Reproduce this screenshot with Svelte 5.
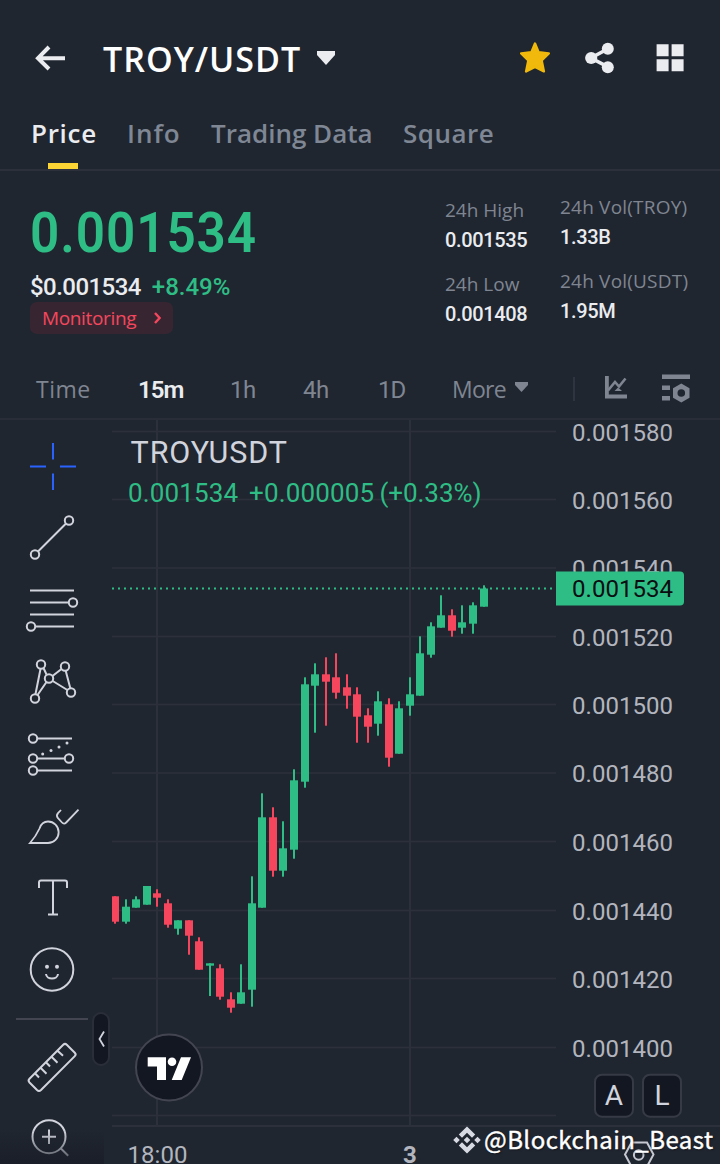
<script>
  const tabs = [
    { label: 'Price', cls: 'price' },
    { label: 'Info', cls: 'info' },
    { label: 'Trading Data', cls: 'data' },
    { label: 'Square', cls: 'square' }
  ];

  const stats = [
    [
      { label: '24h High', value: '0.001535' },
      { label: '24h Low', value: '0.001408' }
    ],
    [
      { label: '24h Vol(TROY)', value: '1.33B' },
      { label: '24h Vol(USDT)', value: '1.95M' }
    ]
  ];

  const gridRows = [431.5, 499.5, 568, 636.5, 704.5, 773, 841.5, 910.5, 978.5, 1047.5, 1115.5];
  const prices = ['0.001580', '0.001560', '0.001540', '0.001520', '0.001500', '0.001480', '0.001460', '0.001440', '0.001420', '0.001400'];

  // [left, body top, body bottom, wick top, wick bottom, rising]
  const candles = [
    [111, 896.3, 921.7, 896.3, 923.7, 0],
    [122, 906.7, 921.7, 899.3, 923.7, 1],
    [132, 899.3, 907.7, 896.3, 907.7, 1],
    [143, 886, 904.7, 886, 904.7, 1],
    [153, 893.3, 897.7, 889.3, 906.7, 0],
    [164, 903.3, 924.7, 899.3, 927.7, 0],
    [174, 920.3, 928.7, 920.3, 934.7, 1],
    [185, 920.3, 935.7, 920.3, 954.7, 0],
    [195, 941.3, 969.7, 937.3, 969.7, 0],
    [206, 963.3, 965.7, 963.3, 996, 1],
    [216, 968.3, 996.7, 964.3, 999.7, 0],
    [227, 999.3, 1007.7, 992.3, 1012.7, 0],
    [237, 992.3, 1003.7, 964.3, 1003.7, 1],
    [248, 903.3, 989.7, 876.3, 1006.7, 1],
    [258, 817.3, 907.7, 793.3, 907.7, 1],
    [269, 817.3, 870.7, 807.3, 876.7, 0],
    [279, 848.3, 870.7, 821.3, 876.7, 1],
    [290, 780.3, 849.7, 769.3, 858.7, 1],
    [301, 684.3, 781.7, 677.3, 787.7, 1],
    [311, 674.3, 685.7, 663.3, 732.7, 1],
    [322, 674.3, 681.7, 657.3, 725.7, 0],
    [332, 677.3, 692.7, 653.3, 698.7, 0],
    [343, 687.3, 695.7, 674.3, 708.7, 0],
    [353, 694.3, 716.7, 687.3, 742.7, 0],
    [364, 715.3, 726.7, 708.3, 742.7, 0],
    [374, 701.3, 723.7, 691.3, 735.7, 1],
    [385, 704.3, 757.7, 698.3, 766.7, 0],
    [395, 708.3, 753.7, 701.3, 753.7, 1],
    [406, 694.3, 705.7, 677.3, 715.7, 1],
    [416, 653.3, 695.7, 636.3, 695.7, 1],
    [427, 626.3, 654.7, 622.3, 657.7, 1],
    [437, 615.3, 627.7, 595.3, 627.7, 1],
    [448, 615.3, 630.7, 609.3, 636.7, 0],
    [458, 622.3, 627.7, 605.3, 633.7, 1],
    [469, 605.3, 623.7, 602.3, 633.7, 1],
    [480, 588.5, 606.7, 585.3, 606.7, 1]
  ];
</script>

<div class="app">
  <header>
    <svg class="back" width="30" height="26" viewBox="0 0 30 26" fill="none" stroke="#eaecef" stroke-width="4">
      <path d="M30 13.2H3M14 2 3 13.2l11 10.8" />
    </svg>
    <h1>TROY/USDT</h1>
    <svg class="caret" width="18" height="14" viewBox="0 0 18 14" fill="#eaecef"><path d="M0 0h18v4l-9 10L0 4z" /></svg>
    <svg class="star" width="30" height="31" viewBox="0 0 30 31" fill="#f0b90b" stroke="#f0b90b" stroke-width="2.4" stroke-linejoin="round">
      <path d="M15 1.5l3.6 8.6 10.2 1.3-7.1 7 2.2 11L15 25l-8.9 4.4 2.2-11-7.1-7 10.2-1.3z" />
    </svg>
    <svg class="share" width="30" height="32" viewBox="0 0 30 32" fill="#eaecef" stroke="#eaecef" stroke-width="3.6">
      <path d="M23.4 6.5 6 16l17.4 9.2" fill="none" />
      <g stroke="none"><circle cx="6.2" cy="16" r="6.1" /><circle cx="22.8" cy="6.7" r="6" /><circle cx="22.8" cy="25.2" r="6" /></g>
    </svg>
    <svg class="grid" width="28" height="28" viewBox="0 0 28 28" fill="#eaecef">
      <path d="M.6.3h12v12H.6zM15.6.3h12v12h-12zM.6 15.3h12v12H.6zM15.6 15.3h12v12h-12z" />
    </svg>
  </header>

  <nav class="tabs">
    {#each tabs as tab, i}
      <span class="tab {tab.cls}" class:active={i === 0}>{tab.label}</span>
    {/each}
  </nav>

  <section class="summary">
    <div class="quote">
      <div class="last">0.001534</div>
      <div class="fiat"><span class="usd">$0.001534</span><span class="up">+8.49%</span></div>
      <div class="badge">
        <span>Monitoring</span>
        <svg width="7" height="12" viewBox="0 0 7 12" fill="none" stroke="#f6465d" stroke-width="2.4"><path d="M1 1l4.6 5L1 11" /></svg>
      </div>
    </div>
    {#each stats as column, c}
      <div class="stats c{c}">
        {#each column as item}
          <div class="stat"><div class="name">{item.label}</div><div class="val">{item.value}</div></div>
        {/each}
      </div>
    {/each}
  </section>

  <nav class="frames">
    <span class="time">Time</span>
    <span class="m15">15m</span>
    <span class="h1">1h</span>
    <span class="h4">4h</span>
    <span class="d1">1D</span>
    <span class="more">More</span>
    <svg class="dd" width="13" height="10" viewBox="0 0 13 10" fill="#7f8591"><path d="M0 0h13v3l-6.5 7L0 3z" /></svg>
    <i></i>
    <svg class="ind" width="22" height="23" viewBox="0 0 22 23" fill="none" stroke="#7f8591">
      <path d="M1.8 0v20.500H22" stroke-width="4" /><path d="M3 14.500l7-8.500 4 4.500 6.500-8" stroke-width="2.6" />
      <path d="M9.500 15l3.500-3.500 4 3.500z" fill="#7f8591" stroke="none" />
    </svg>
    <svg class="set" width="28" height="29" viewBox="0 0 28 29" fill="#7f8591">
      <path d="M0 .5h28V5H0zM0 11.500h8V16H0zM0 22h8v4.500H0z" />
      <path fill-rule="evenodd" d="M19.300 9.500l8.200 4.700v9.600l-8.200 4.700-8.300-4.700v-9.600zM19.300 15.200a3.800 3.800 0 1 0 0 7.600 3.800 3.800 0 0 0 0-7.600z" />
    </svg>
  </nav>

  <main>
    <aside>
      <svg class="tool" viewBox="0 0 104 72"><path stroke="#2962ff" d="M53 13v16.500M53 43.500V60M30 36.500h16M60 36.500h16" /></svg>
      <svg class="tool" viewBox="0 0 104 72"><circle cx="69" cy="18.500" r="4.200" /><circle cx="35" cy="52.500" r="4.200" /><path d="M66 21.500l-28 28" /></svg>
      <svg class="tool" viewBox="0 0 104 72"><path d="M30 16.500h44M30 28.500h39M30 40.500h44M35 52.500h39" /><circle cx="73" cy="28.500" r="4.200" /><circle cx="31" cy="52.500" r="4.200" /></svg>
      <svg class="tool" viewBox="0 0 104 72">
        <circle cx="41" cy="18.500" r="4.200" /><circle cx="65" cy="20.500" r="4.200" /><circle cx="49" cy="32.500" r="4.200" /><circle cx="71" cy="46.500" r="4.200" /><circle cx="35" cy="52.500" r="4.200" />
        <path d="M40.500 23L35.500 48M43.500 22l3 6.500M61.500 23l-9 7M65.700 24.700l4.600 17.600M52.700 35l14.700 9M46.500 36L37.500 49" />
      </svg>
      <svg class="tool" viewBox="0 0 104 72">
        <path d="M37 20.500h35M37 40.500h28M37 52.500h35" /><circle cx="33" cy="20.500" r="4.200" /><circle cx="33" cy="40.500" r="4.200" /><circle cx="69" cy="40.500" r="4.200" /><circle cx="33" cy="52.500" r="4.200" />
        <g fill="#d1d4dc" stroke="none"><circle cx="42.700" cy="36" r="1.500" /><circle cx="51" cy="32.500" r="1.500" /><circle cx="59" cy="29" r="1.500" /><circle cx="67" cy="25" r="1.500" /></g>
      </svg>
      <svg class="tool thin" viewBox="0 0 104 72">
        <path d="M30 53C33.500 49 37 44 39.500 38.500c1.500-4.500 4.500-7 8.500-7a10.600 10.700 0 0 1 0 21.500z" />
        <path d="M61 20l-3 3.200q-2.200 2.500 0 5l4 4.300q2 2.200 4.200 0L78.500 19.700" />
      </svg>
      <svg class="tool" viewBox="0 0 104 72"><path d="M39 26v-5.500q0-2 2-2h24q2 0 2 2V26M53 18.500v34M48 52.500h10" /></svg>
      <svg class="tool" viewBox="0 0 104 72"><circle cx="52" cy="35.500" r="21.300" /><path d="M46 40c.5 6 11.500 6 12 0" /><g fill="#d1d4dc" stroke="none"><circle cx="47" cy="32.700" r="2" /><circle cx="57" cy="32.700" r="2" /></g></svg>
      <hr />
      <svg class="tool ruler" viewBox="0 0 104 72">
        <path d="M63.200 9.700q1.800-1.700 3.600 0l8 8q1.700 1.700 0 3.400L41 55q-2 1.900-4 0l-7.500-7.500q-1.800-1.900 0-3.700zM35 38.300l4 4.200M40.500 32.800l6 6M46 27.300l4 4.200M51.500 21.800l6 6M57.500 15.800l5.500 5" />
      </svg>
      <svg class="tool loupe" viewBox="0 0 104 52"><circle cx="49" cy="26.700" r="16.500" /><path d="M49 19.500V34M42 26.700h14M60.700 38.300l7.500 7.500" /></svg>
      <div class="fade"></div>
    </aside>

    <svg class="chart" width="608" height="744" viewBox="112 420 608 744">
      <g fill="#2b303a">
        <rect x="156" y="420" width="2" height="706" />
        <rect x="409" y="420" width="2" height="706" />
        {#each gridRows as y}
          <rect x="112" y={y - 0.8} width="444" height="1.6" />
        {/each}
        <rect x="112" y="1125" width="608" height="2" />
      </g>
      <path d="M112 588.500H556" stroke="#2ebd85" stroke-width="2" stroke-dasharray="2 4" />
      {#each candles as [x, top, bottom, high, low, up]}
        <g fill={up ? '#2ebd85' : '#f6465d'}>
          <rect {x} y={top} width="8" height={bottom - top} />
          <rect x={x + 3} y={high} width="2" height={low - high} />
        </g>
      {/each}
      <g class="axis">
        {#each prices as p, i}
          <text x="572" y={gridRows[i] + 9} textLength="101">{p}</text>
        {/each}
        <text x="127.500" y="1162.500" textLength="60">18:00</text>
        <text x="403" y="1162.500" font-weight="700">3</text>
      </g>
      <path d="M556 571.500h124q4 0 4 4v26q0 4-4 4H556z" fill="#2ebd85" />
      <text class="tag" x="572" y="597.400" textLength="101">0.001534</text>
      <text class="pair" x="130.500" y="462.600" textLength="156.500">TROYUSDT</text>
      <g class="move">
        <text x="128" y="502.400" textLength="110">0.001534</text>
        <text x="249" y="502.400" textLength="125">+0.000005</text>
        <text x="379.500" y="502.400" textLength="102">(+0.33%)</text>
      </g>
      <g>
        <circle cx="169" cy="1067.500" r="33" fill="#131722" stroke="#434651" stroke-width="2" />
        <path fill="#fff" d="M147.700 1057.300H166V1080h-9v-13.500h-9.300zM181 1057.300h10L181.700 1080h-10z" /><circle cx="172" cy="1061.700" r="4.300" fill="#fff" />
      </g>
      <g fill="#131722" stroke="#363a45" stroke-width="2"><rect x="595" y="1074.700" width="38" height="42" rx="7" /><rect x="643" y="1074.700" width="38" height="42" rx="7" /></g>
      <g class="keys"><text x="614" y="1104.500">A</text><text x="662" y="1104.500">L</text></g>
      <g fill="none" stroke="#c5c8d0" stroke-width="2"><path d="M631.500 1142.500h15.500l6.500 12-6.500 12h-15.500l-6.500-12z" /><circle cx="638.700" cy="1155" r="4.800" /></g>
    </svg>

    <div class="handle"><svg width="7" height="18" viewBox="0 0 7 18" fill="none" stroke="#d1d4dc" stroke-width="1.8"><path d="M6 1.500L1.500 9 6 16.500" /></svg></div>

    <div class="credit">
      <svg width="28" height="28" viewBox="0 0 28 28" fill="#d7dae2">
        <path d="M14 .5l8.200 8-3.200 3.200-5-5-5 5-3.200-3.200zM14 27.500l8.200-8-3.200-3.200-5 5-5-5-3.200 3.200zM14 10.700l3.300 3.300-3.300 3.300-3.300-3.300zM3.500 10.700L6.800 14l-3.300 3.300L.2 14zM24.500 10.700l3.300 3.300-3.300 3.300-3.300-3.300z" />
      </svg>
      <span>@Blockchain_Beast</span>
    </div>
  </main>
</div>

<style>
  :global(body) { margin: 0; background: #202630; }
  .app { width: 720px; height: 1164px; overflow: hidden; background: #202630; color: #eaecef; font-family: Roboto, "Liberation Sans", sans-serif; }
  svg { display: block; flex: none; }
  span { white-space: nowrap; }
  header { height: 116px; box-sizing: border-box; padding: 0 36px 0 35px; display: flex; align-items: center; }
  h1 { margin: 2px 0 0 38px; width: 197px; font: 600 34px/48px "Open Sans", sans-serif; letter-spacing: 1px; color: #fff; white-space: nowrap; }
  .caret { margin-left: 17px; }
  .star { margin: -1px 0 0 auto; }
  .share { margin-left: 35px; }
  .grid { margin-left: 41px; }

  .tabs { height: 53px; border-bottom: 2px solid #2b303a; display: flex; padding-left: 31px; font: 600 26px/34px "Open Sans", sans-serif; color: #7f8794; }
  .tab { position: relative; }
  .price { width: 96px; letter-spacing: 0.7px; }
  .info { width: 84px; letter-spacing: 1px; }
  .data { width: 192px; }
  .square { letter-spacing: 0.5px; }
  .active { color: #eaecef; }
  .active::after { content: ""; position: absolute; left: 17px; top: 47px; width: 30px; height: 6px; background: #fcd535; }

  .summary { height: 189px; display: flex; padding-left: 30px; }
  .quote { width: 415px; padding-top: 31px; }
  .last { font-size: 56px; line-height: 62px; font-weight: 600; color: #2ebd85; letter-spacing: 1px; transform: scaleX(0.916); transform-origin: left; }
  .fiat { display: flex; gap: 11px; font-size: 24px; line-height: 30px; font-weight: 500; margin-top: 8px; }
  .usd { letter-spacing: -0.55px; }
  .up { color: #2ebd85; }
  .badge { width: 143px; height: 32px; box-sizing: border-box; padding: 0 12px; border-radius: 7px; background: #372631; color: #f6465d; display: flex; align-items: center; justify-content: space-between; font: 400 19px/30px "Open Sans", sans-serif; letter-spacing: -0.35px; }
  .badge span { margin-top: -1px; }
  .stats { padding-top: 25px; width: 115px; }
  .c1 { padding-top: 22px; }
  .stat { height: 74px; }
  .name { font: 400 19px/28px "Open Sans", sans-serif; color: #7f8591; white-space: nowrap; }
  .c1 .name { letter-spacing: 0.2px; }
  .val { margin-top: 1px; font-size: 20px; line-height: 30px; font-weight: 500; letter-spacing: -0.35px; }

  .frames { height: 58px; border-bottom: 2px solid #282d37; display: flex; align-items: center; padding-left: 36px; font-size: 24px; color: #7f8591; }
  .time, .more { font-family: "Open Sans", sans-serif; font-size: 23px; }
  .time { width: 102px; letter-spacing: 0.5px; }
  .m15 { width: 92px; color: #eaecef; font-weight: 600; letter-spacing: -1px; }
  .h1 { width: 73px; letter-spacing: -0.5px; }
  .h4 { width: 75px; letter-spacing: -0.5px; }
  .d1 { width: 74px; letter-spacing: -1px; }
  .m15, .h1, .h4, .d1 { padding-top: 1px; }
  .more { width: 63px; letter-spacing: -0.7px; }
  .dd { margin-top: -4px; }
  .frames i { width: 2px; height: 24px; background: #2f3540; margin: 0 30px 0 45px; }
  .ind { margin-top: -3px; }
  .set { margin: -2px 0 0 35px; }

  main { position: relative; display: flex; height: 744px; }
  aside { width: 112px; padding-top: 10px; box-sizing: border-box; position: relative; }
  .tool { width: 104px; height: 72px; fill: none; stroke: #d1d4dc; stroke-width: 2; }
  .thin { stroke-width: 1.8; }
  hr { width: 72px; height: 2px; margin: 12px 0 0 16px; border: 0; background: #434651; }
  .ruler { margin-top: 15px; }
  .loupe { height: 52px; margin-top: 3px; }
  .fade { position: absolute; left: 0; bottom: 0; width: 104px; height: 34px; background: linear-gradient(transparent, #171b25bb); }
  .chart text { font-family: Roboto, sans-serif; }
  .axis { font-size: 24px; fill: #b2b5be; }
  .tag { font-size: 24px; fill: #0b0e11; }
  .pair { font-size: 30.5px; fill: #d1d4dc; }
  .move { font-size: 26px; fill: #2ebd85; }
  .keys { font-size: 28px; fill: #d1d4dc; text-anchor: middle; }
  .handle { position: absolute; left: 92px; top: 592px; width: 14px; height: 50px; border: 2px solid #2a2e39; border-radius: 9px; background: #131722; display: flex; align-items: center; justify-content: center; }
  .credit { position: absolute; left: 453px; top: 702px; height: 36px; display: flex; align-items: center; gap: 3px; font: 400 24px/34px "Noto Sans CJK SC", sans-serif; letter-spacing: 0.45px; -webkit-text-stroke: 0.4px #fff; color: #fff; text-shadow: 1px 1px 2px #0008; }
  .credit span { margin-top: -2px; }
</style>
